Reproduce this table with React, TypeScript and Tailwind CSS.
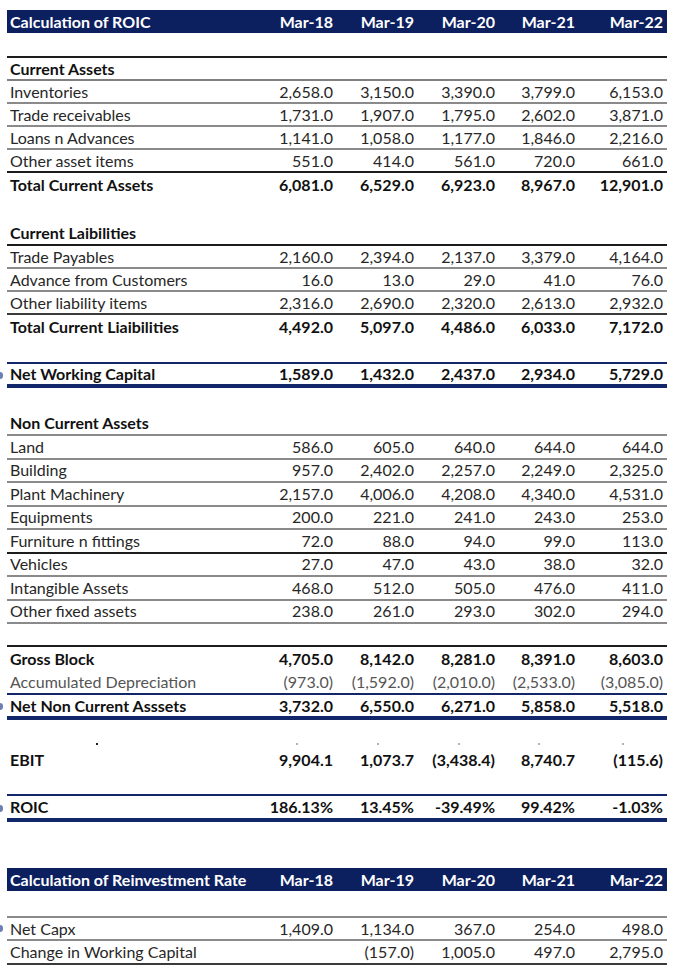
import React, { FC } from "react";
import clsx from "clsx";

const GRID = "grid grid-cols-[249px_81px_81px_81px_80px_88px] w-[660px] items-center";

interface RowProps {
  label: string;
  values?: string[];
  bold?: boolean;
  muted?: boolean;
  marker?: boolean;
  className?: string;
}

const Row: FC<RowProps> = ({ label, values = [], bold, muted, marker, className }) => {
  return (
    <div className="flex">
      <div className="w-[7px] flex items-center">
        {marker && <div className="w-[3px] h-[7px] bg-[#6d80b6] rounded-r-sm"></div>}
      </div>
      <div
        className={clsx(
          GRID,
          bold ? "font-bold text-[#111111]" : muted ? "text-[#555555]" : "text-[#272727]",
          className
        )}
      >
        <div className="pl-[3px] whitespace-nowrap">{label}</div>
        {values.map((v, i) => (
          <div key={i} className="pr-[4px] text-right whitespace-nowrap">
            {v}
          </div>
        ))}
      </div>
    </div>
  );
};

const Header: FC<{ title: string }> = ({ title }) => {
  return (
    <div className="flex">
      <div className="w-[7px]"></div>
      <div className={clsx(GRID, "h-[23px] bg-[#0c1f5f] text-white font-bold")}>
        <div className="pl-[3px] whitespace-nowrap">{title}</div>
        {["Mar-18", "Mar-19", "Mar-20", "Mar-21", "Mar-22"].map((m) => (
          <div key={m} className="pr-[4px] text-right">
            {m}
          </div>
        ))}
      </div>
    </div>
  );
};

const App: FC = () => {
  return (
    <div className="w-[680px] h-[972px] bg-white pt-[10px] font-['Lato',sans-serif] text-[16px] leading-none overflow-hidden">
      <Header title="Calculation of ROIC" />

      <div className="h-[23px]"></div>

      {/* current assets */}
      <Row label="Current Assets" bold className="h-[25px] border-t-2 border-b-2 border-t-[#1c1c1c] border-b-[#808080]" />
      <Row label="Inventories" values={["2,658.0", "3,150.0", "3,390.0", "3,799.0", "6,153.0"]} className="h-[23px] border-b-2 border-[#8a8a8a]" />
      <Row label="Trade receivables" values={["1,731.0", "1,907.0", "1,795.0", "2,602.0", "3,871.0"]} className="h-[23px] border-b-2 border-[#8a8a8a]" />
      <Row label="Loans n Advances" values={["1,141.0", "1,058.0", "1,177.0", "1,846.0", "2,216.0"]} className="h-[23px] border-b-2 border-[#8a8a8a]" />
      <Row label="Other asset items" values={["551.0", "414.0", "561.0", "720.0", "661.0"]} className="h-[23px] border-b-2 border-[#1c1c1c]" />
      <Row label="Total Current Assets" bold values={["6,081.0", "6,529.0", "6,923.0", "8,967.0", "12,901.0"]} className="h-[23px]" />

      <div className="h-[26px]"></div>

      {/* current liabilities */}
      <Row label="Current Laibilities" bold className="h-[24px] border-b-2 border-[#1c1c1c]" />
      <Row label="Trade Payables" values={["2,160.0", "2,394.0", "2,137.0", "3,379.0", "4,164.0"]} className="h-[23px] border-b-2 border-[#8a8a8a]" />
      <Row label="Advance from Customers" values={["16.0", "13.0", "29.0", "41.0", "76.0"]} className="h-[23px] border-b-2 border-[#8a8a8a]" />
      <Row label="Other liability items" values={["2,316.0", "2,690.0", "2,320.0", "2,613.0", "2,932.0"]} className="h-[23px] border-b-2 border-[#3a3a3a]" />
      <Row label="Total Current Liaibilities" bold values={["4,492.0", "5,097.0", "4,486.0", "6,033.0", "7,172.0"]} className="h-[23px]" />

      <div className="h-[24px]"></div>

      <Row label="Net Working Capital" bold marker values={["1,589.0", "1,432.0", "2,437.0", "2,934.0", "5,729.0"]} className="h-[26px] border-t-2 border-b-4 border-[#12266a]" />

      <div className="h-[24px]"></div>

      {/* non current assets */}
      <Row label="Non Current Assets" bold className="h-[24px] border-b-2 border-[#8a8a8a]" />
      <Row label="Land" values={["586.0", "605.0", "640.0", "644.0", "644.0"]} className="h-[23.5px] border-b-2 border-[#8a8a8a]" />
      <Row label="Building" values={["957.0", "2,402.0", "2,257.0", "2,249.0", "2,325.0"]} className="h-[23.5px] border-b-2 border-[#8a8a8a]" />
      <Row label="Plant Machinery" values={["2,157.0", "4,006.0", "4,208.0", "4,340.0", "4,531.0"]} className="h-[23.5px] border-b-2 border-[#8a8a8a]" />
      <Row label="Equipments" values={["200.0", "221.0", "241.0", "243.0", "253.0"]} className="h-[23.5px] border-b-2 border-[#8a8a8a]" />
      <Row label="Furniture n fittings" values={["72.0", "88.0", "94.0", "99.0", "113.0"]} className="h-[23.5px] border-b-2 border-[#1c1c1c]" />
      <Row label="Vehicles" values={["27.0", "47.0", "43.0", "38.0", "32.0"]} className="h-[23.5px] border-b-2 border-[#8a8a8a]" />
      <Row label="Intangible Assets" values={["468.0", "512.0", "505.0", "476.0", "411.0"]} className="h-[23.5px] border-b-2 border-[#8a8a8a]" />
      <Row label="Other fixed assets" values={["238.0", "261.0", "293.0", "302.0", "294.0"]} className="h-[23.5px] border-b-2 border-[#8a8a8a]" />

      <div className="h-[21px]"></div>

      <Row label="Gross Block" bold values={["4,705.0", "8,142.0", "8,281.0", "8,391.0", "8,603.0"]} className="h-[25px] border-t-2 border-[#1c1c1c]" />
      <Row label="Accumulated Depreciation" muted values={["(973.0)", "(1,592.0)", "(2,010.0)", "(2,533.0)", "(3,085.0)"]} className="h-[23px]" />
      <Row label="Net Non Current Asssets" bold marker values={["3,732.0", "6,550.0", "6,271.0", "5,858.0", "5,518.0"]} className="h-[27px] border-t-2 border-b-4 border-[#12266a]" />

      {/* stray dots */}
      <div className="flex h-[28px] items-end pb-[3px]">
        <div className="w-[7px]"></div>
        <div className={GRID}>
          <div className="pl-[89px]">
            <div className="w-[2px] h-[2px] bg-[#222]"></div>
          </div>
          {[0, 1, 2, 3, 4].map((i) => (
            <div key={i} className="flex justify-center">
              <div className="w-[2px] h-[2px] bg-[#b5b5b5]"></div>
            </div>
          ))}
        </div>
      </div>

      <Row label="EBIT" bold values={["9,904.1", "1,073.7", "(3,438.4)", "8,740.7", "(115.6)"]} className="h-[23px]" />

      <div className="h-[23px]"></div>

      <Row label="ROIC" bold marker values={["186.13%", "13.45%", "-39.49%", "99.42%", "-1.03%"]} className="h-[28px] border-t-2 border-b-4 border-[#12266a]" />

      <div className="h-[46px]"></div>

      <Header title="Calculation of Reinvestment Rate" />

      <div className="h-[25px]"></div>

      <Row label="Net Capx" marker values={["1,409.0", "1,134.0", "367.0", "254.0", "498.0"]} className="h-[25px] border-t-2 border-b-2 border-[#8a8a8a]" />
      <Row label="Change in Working Capital" values={["", "(157.0)", "1,005.0", "497.0", "2,795.0"]} className="h-[24px] border-b-2 border-[#3a3a3a]" />
    </div>
  );
};

export default App;
